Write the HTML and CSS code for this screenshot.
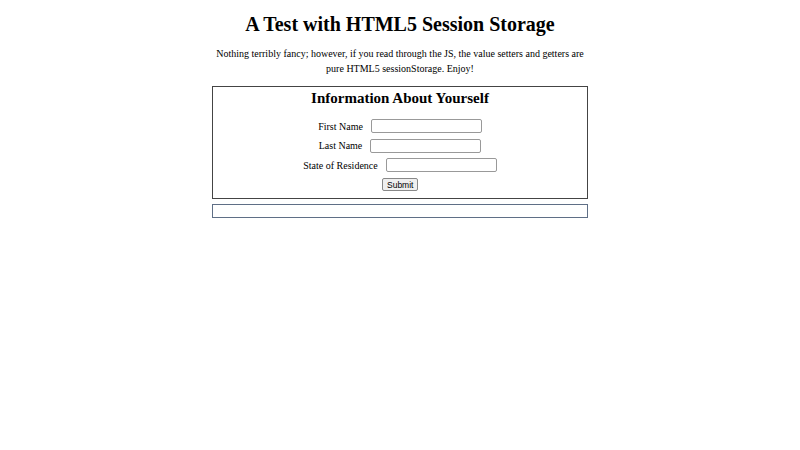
FILE: index.html
```html
<!DOCTYPE html>
<html lang="en">
    <head>
        <meta charset="UTF-8">
        <title>HTML5 Session Storage</title>
        <link rel="stylesheet" href="styles.css">
    </head>
<body>
    <div class="wrapper">
        <h1>A Test with HTML5 Session Storage</h1>
        <p class="intro">Nothing terribly fancy; however, if you read through the JS, the value setters and getters are pure HTML5 sessionStorage. Enjoy!</p>

        <div class="box">
            <h2>Information About Yourself</h2>
            <form id="infoForm">
                <div class="row">
                    <label for="firstName">First Name</label>
                    <input type="text" id="firstName">
                </div>
                <div class="row">
                    <label for="lastName">Last Name</label>
                    <input type="text" id="lastName">
                </div>
                <div class="row">
                    <label for="state">State of Residence</label>
                    <input type="text" id="state">
                </div>
                <div class="row">
                    <input type="submit" value="Submit">
                </div>
            </form>
        </div>

        <div id="output" class="output"></div>
    </div>

    <script>
        document.getElementById('infoForm').addEventListener('submit', function (e) {
            e.preventDefault();
            sessionStorage.setItem('firstName', document.getElementById('firstName').value);
            sessionStorage.setItem('lastName', document.getElementById('lastName').value);
            sessionStorage.setItem('state', document.getElementById('state').value);
            document.getElementById('output').textContent =
                sessionStorage.getItem('firstName') + ' ' +
                sessionStorage.getItem('lastName') + ', ' +
                sessionStorage.getItem('state');
        });
    </script>
</body>
</html>
```

FILE: styles.css
```css
body {
    font-family: 'Liberation Serif', 'Times New Roman', serif;
    margin: 0;
    padding-top: 12px;
    color: #000;
    background-color: #fff;
    text-align: center;
}

.wrapper {
    width: 376px;
    margin: 0 auto;
}

h1 {
    font-size: 20px;
    line-height: 24px;
    margin: 0;
}

.intro {
    font-size: 10px;
    line-height: 15px;
    margin: 10px 0;
}

.box {
    border: 1px solid #444;
    padding: 2px 0 6px 0;
}

h2 {
    font-size: 15px;
    line-height: 18px;
    margin: 0 0 12px 0;
}

.row {
    display: flex;
    justify-content: center;
    align-items: center;
    gap: 8px;
    height: 14px;
    font-size: 10px;
    margin-bottom: 5.5px;
}

.row:last-child {
    margin-bottom: 0;
}

input[type="text"] {
    box-sizing: border-box;
    width: 111px;
    height: 14px;
    padding: 1px;
    border: 1px solid #999;
    border-radius: 2px;
}

input[type="submit"] {
    box-sizing: border-box;
    font-family: 'Liberation Sans', Arial, sans-serif;
    font-size: 8.5px;
    padding: 0 4px;
    width: 36px;
    height: 13px;
    border: 1px solid #888;
    border-radius: 2px;
    background-color: #efefef;
}

.output {
    box-sizing: border-box;
    height: 14px;
    margin-top: 5px;
    border: 1px solid #5f6f86;
}
```
